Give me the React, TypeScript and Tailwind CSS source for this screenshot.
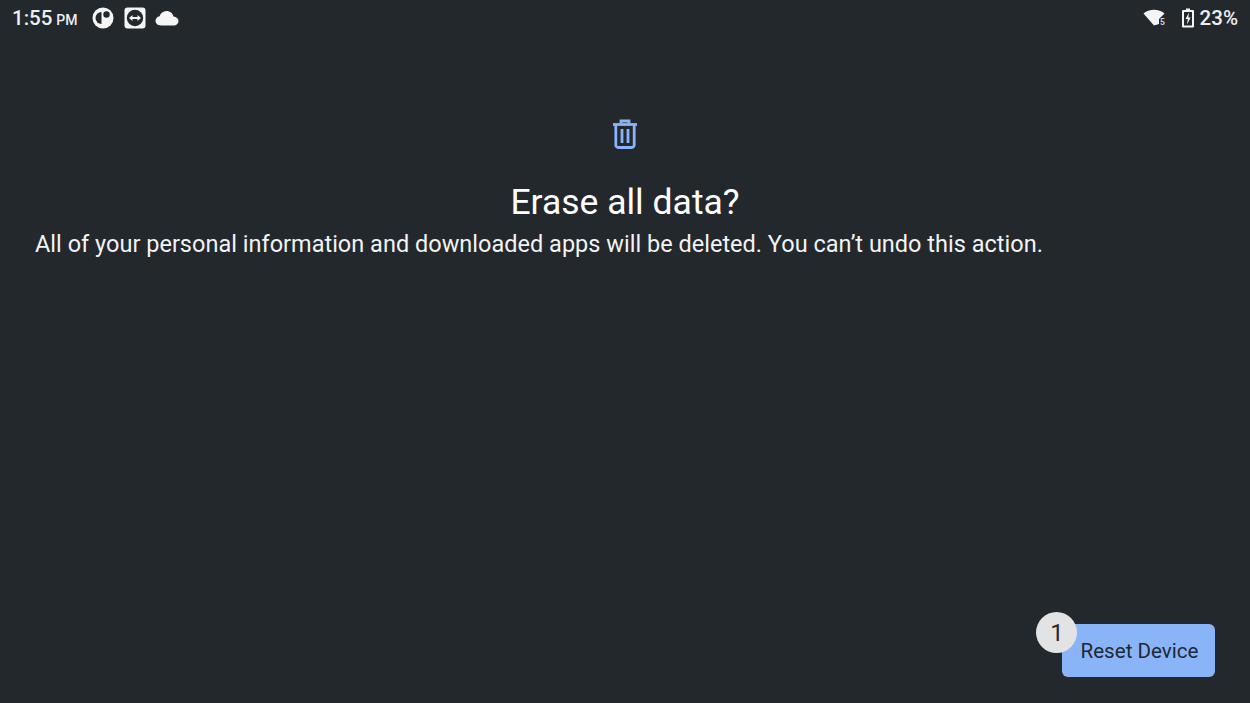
const App = () => {
  return (
    <div className="flex h-[703px] w-[1250px] flex-col overflow-hidden bg-[#23282c] font-['Roboto',sans-serif] text-white">
      {/* Status bar */}
      <div className="flex h-[36px] items-center justify-between pl-[12px] pr-[12px]">
        <div className="flex items-center">
          <span className="text-[20.5px] font-medium leading-none text-[#eeeeee]">1:55</span>
          <span className="ml-[4px] mt-[3px] text-[14px] font-medium leading-none text-[#eeeeee]">PM</span>
          <svg viewBox="0 0 22 22" className="ml-[14px] h-[22px] w-[22px]">
            <circle cx="11" cy="11" r="10.5" fill="#f5f5f5" />
            <path d="M9.5 5 A6 6 0 0 0 9.5 17 Z" fill="#23282c" />
            <circle cx="14.5" cy="7.5" r="3.2" fill="#23282c" />
          </svg>
          <svg viewBox="0 0 22 22" className="ml-[10px] h-[22px] w-[22px]">
            <rect x="0.5" y="0.5" width="21" height="21" rx="3" fill="#f5f5f5" />
            <circle cx="11" cy="11" r="8.2" fill="#23282c" />
            <path d="M5 11 L8.5 8 V10 H13.5 V8 L17 11 L13.5 14 V12 H8.5 V14 Z" fill="#f5f5f5" />
          </svg>
          <svg viewBox="0 0 24 16" className="ml-[9px] h-[16px] w-[24px]">
            <path d="M6 15.5 C2.6 15.5 0.5 13.4 0.5 10.8 C0.5 8.4 2.2 6.6 4.6 6.2 C5.6 3.2 8.2 1 11.5 1 C15 1 17.8 3.3 18.5 6.4 C21.4 6.6 23.5 8.5 23.5 11 C23.5 13.6 21.4 15.5 18.5 15.5 Z" fill="#f5f5f5" />
          </svg>
        </div>
        <div className="flex items-center">
          <svg viewBox="0 0 24 18" className="mr-[14px] h-[18px] w-[24px]">
            <path d="M0.5 4.5 C3.5 2 7 0.8 11 0.8 C15 0.8 18.5 2 21.5 4.5 L16 10 L16 15 L11 16.5 Z" fill="#f5f5f5" />
            <text x="17" y="15.5" fontSize="8.5" fontWeight="700" fill="#d0d0d0" fontFamily="Roboto, sans-serif">5</text>
          </svg>
          <svg viewBox="0 0 14 20" className="mr-[5px] h-[20px] w-[14px]">
            <path d="M5 0.5 H9 V2 H12 A1 1 0 0 1 13 3 V18.5 A1 1 0 0 1 12 19.5 H2 A1 1 0 0 1 1 18.5 V3 A1 1 0 0 1 2 2 H5 Z" fill="#f5f5f5" />
            <rect x="3" y="4" width="8" height="13.5" fill="#23282c" />
            <path d="M8 4.5 L4.5 11 H6.8 L6 16.5 L9.7 9.5 H7.4 Z" fill="#f5f5f5" />
          </svg>
          <span className="text-[20.5px] font-medium leading-none text-[#eeeeee]">23%</span>
        </div>
      </div>

      {/* Content */}
      <div className="relative flex flex-1 flex-col px-[35px]">
        <div className="mt-[83px] flex justify-center">
          <svg viewBox="0 0 26 30" className="h-[30px] w-[26px]" fill="none" stroke="#8ab4f8" strokeWidth="2.8">
            <path d="M1 5.5 H25" />
            <path d="M9 4.5 V2 H17 V4.5" />
            <path d="M3.8 5.5 V26 A2.5 2.5 0 0 0 6.3 28.5 H19.7 A2.5 2.5 0 0 0 22.2 26 V5.5" />
            <path d="M10 10 V24 M16 10 V24" />
          </svg>
        </div>
        <h1 className="mt-[28px] text-center text-[35.5px] font-normal leading-[50px] text-white">
          Erase all data?
        </h1>
        <p className="mt-[1px] text-[23.5px] leading-[32px] tracking-[0.01px] text-[#f1f3f4]">
          All of your personal information and downloaded apps will be deleted. You can’t undo this action.
        </p>

        <div className="mt-auto mb-[26px] flex justify-end">
          <button className="relative h-[53px] w-[153px] rounded-[6px] bg-[#8ab4f8] pl-[2px] pt-[1px] text-[20.6px] text-[#202836]">
            Reset Device
            <span className="absolute -left-[26px] -top-[12px] flex h-[41px] w-[41px] items-center justify-center rounded-full bg-[#e3e3e3] pl-[1px] text-[24px] text-[#2a2a2a]">
              1
            </span>
          </button>
        </div>
      </div>
    </div>
  )
}

export default App
